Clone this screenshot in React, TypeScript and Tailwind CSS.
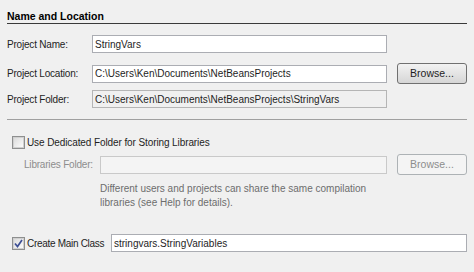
import React from 'react';

const font = { fontFamily: '"Liberation Sans", Arial, sans-serif' };

const Checkbox: React.FC<{ checked?: boolean }> = ({ checked }) => (
  <span className="flex h-[13px] w-[13px] shrink-0 items-center justify-center border border-[#8e8f8f] bg-white">
    <span className="flex h-[11px] w-[11px] items-center justify-center border border-[#d0d0d0] bg-gradient-to-br from-[#dcdcdc] to-[#fbfbfb]">
      {checked && (
        <svg width="9" height="9" viewBox="0 0 9 9">
          <path d="M1 4.5 L3.5 7.5 L8 1" fill="none" stroke="#3d4f95" strokeWidth="1.7" />
        </svg>
      )}
    </span>
  </span>
);

const Button: React.FC<{ disabled?: boolean }> = ({ disabled }) => (
  <button
    className={
      disabled
        ? 'ml-auto h-[21px] w-[70px] shrink-0 rounded-[3px] border border-[#adb2b5] bg-[#f4f4f4] text-[10.5px] text-[#8d8d8d]'
        : 'ml-auto h-[21px] w-[70px] shrink-0 rounded-[3px] border border-[#707070] bg-gradient-to-b from-[#f2f2f2] to-[#d6d6d6] text-[10.5px] text-[#1e1e1e]'
    }
  >
    Browse...
  </button>
);

export default function App() {
  return (
    <div className="h-[272px] w-[474px] whitespace-nowrap bg-[#f0f0f0] px-[7px] text-[10px] text-[#1e1e1e]" style={font}>
      <div className="border-b border-[#3a3a3a] pt-[9px] text-[10.5px] font-bold leading-[14px] text-black">
        Name and Location
      </div>

      <div className="mt-[11px] flex h-[18px] items-center">
        <span className="w-[85px] shrink-0 tracking-[-0.2px]">Project Name:</span>
        <div className="flex h-[18px] w-[295px] shrink-0 items-center border border-[#abadb3] bg-white px-[2px]">StringVars</div>
      </div>

      <div className="mt-[10px] flex h-[21px] items-center">
        <span className="w-[85px] shrink-0 tracking-[-0.2px]">Project Location:</span>
        <div className="flex h-[18px] w-[295px] shrink-0 items-center border border-[#abadb3] bg-white px-[2px]">
          C:\Users\Ken\Documents\NetBeansProjects
        </div>
        <Button />
      </div>

      <div className="mt-[6px] flex h-[18px] items-center">
        <span className="w-[85px] shrink-0 tracking-[-0.2px]">Project Folder:</span>
        <div className="flex h-[18px] w-[295px] shrink-0 items-center border border-[#b5b5b5] bg-[#f0f0f0] px-[2px]">
          C:\Users\Ken\Documents\NetBeansProjects\StringVars
        </div>
      </div>

      <div className="mt-[11px] border-t border-[#a0a0a0]" />

      <div className="mt-[14px] flex h-[16px] items-center gap-[2px] pl-[5px]">
        <Checkbox />
        <span className="tracking-[-0.1px]">Use Dedicated Folder for Storing Libraries</span>
      </div>

      <div className="mt-[4px] flex h-[21px] items-center pl-[17px]">
        <span className="w-[76px] shrink-0 tracking-[-0.2px] text-[#8d8d8d]">Libraries Folder:</span>
        <div className="h-[18px] w-[287px] shrink-0 border border-[#c9c9c9] bg-[#f4f4f4]" />
        <Button disabled />
      </div>

      <div className="mt-[7px] pl-[93px] leading-[14px] text-[#6d6d6d]">
        <div>Different users and projects can share the same compilation</div>
        <div>libraries (see Help for details).</div>
      </div>

      <div className="mt-[24px] flex h-[18px] items-center pl-[5px]">
        <Checkbox checked />
        <span className="ml-[2px] w-[84px] shrink-0 tracking-[-0.3px]">Create Main Class</span>
        <div className="flex h-[18px] flex-1 items-center border border-[#abadb3] bg-white px-[2px]">
          stringvars.StringVariables
        </div>
      </div>
    </div>
  );
}
